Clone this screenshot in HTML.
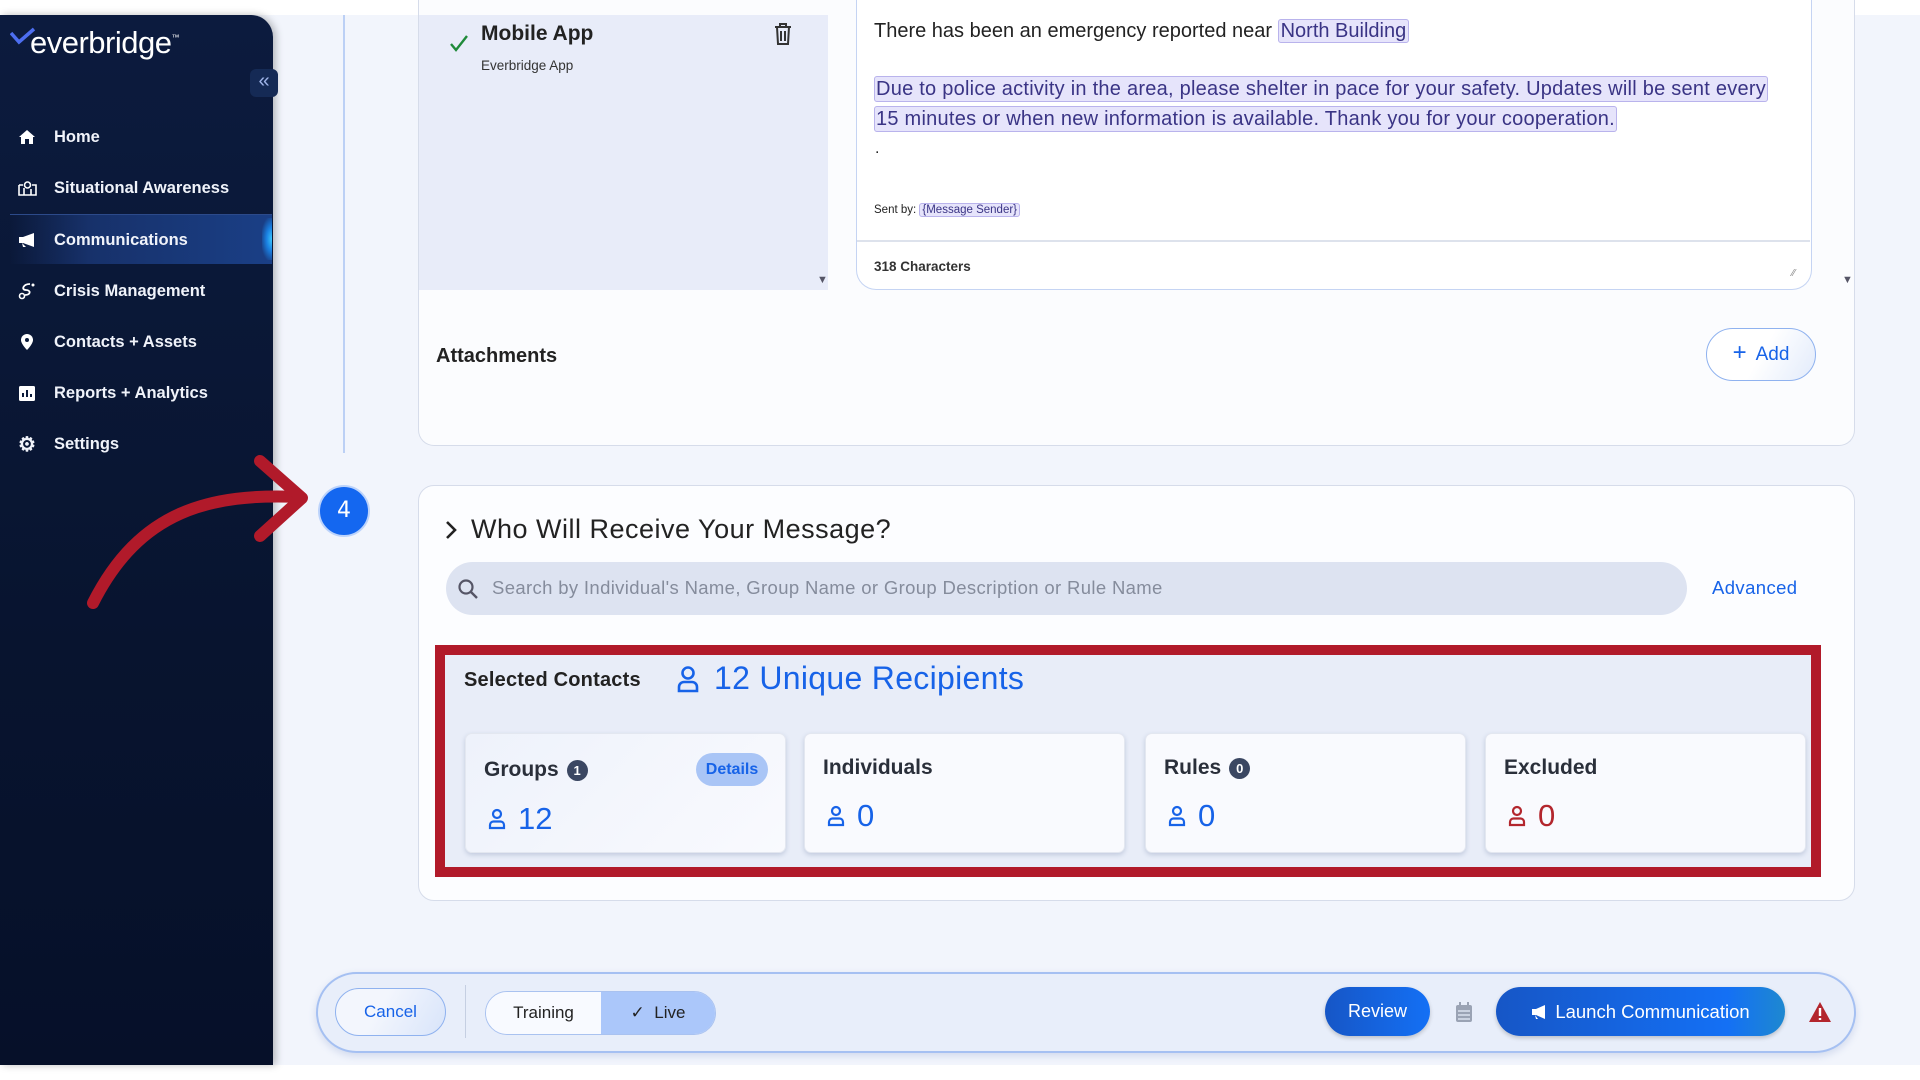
<!DOCTYPE html>
<html><head><meta charset="utf-8"><style>
*{margin:0;padding:0;box-sizing:border-box}
body{width:1920px;height:1080px;overflow:hidden;background:#fff;font-family:"Liberation Sans",sans-serif;position:relative}
.abs{position:absolute}
#main{left:0;top:15px;width:1920px;height:1050px;background:#f2f5fc}
#side{left:0;top:15px;width:273px;height:1050px;background:linear-gradient(180deg,#0c1b3e,#08142f 60%,#061029);border-radius:0 22px 0 0;box-shadow:3px 0 8px rgba(0,0,0,.25)}
.nav{position:absolute;left:0;width:272px;height:40px;color:#f0f3fa;font-size:16.5px;font-weight:bold;display:flex;align-items:center}
.nav .ic{width:54px;display:flex;justify-content:center;padding-left:0}
.card{background:#fbfcfe;border:1.5px solid #d6dcea;border-radius:16px}
.hl{background:#e6e4fb;border:1px solid #b9b3ec;border-radius:3px;color:#3a3485}
.sc{position:absolute;top:733px;width:321px;height:120px;background:#f9fafe;border-radius:7px;box-shadow:0 2px 5px rgba(60,80,130,.22);border:1px solid #e3e7f0}
.sc .tt{position:absolute;left:18px;top:22px;font-size:21px;font-weight:bold;color:#2a2f3a;display:flex;align-items:center}
.badge{display:inline-block;width:21px;height:21px;border-radius:50%;background:#3b4762;color:#fff;font-size:13px;text-align:center;line-height:21px;margin-left:8px}
.sc .v{position:absolute;left:22px;top:64px;font-size:31px;color:#1763e8;display:flex;align-items:center}
.sc .v svg{margin-right:12px}
</style></head><body>
<div id="main" class="abs"></div>
<div class="abs" style="left:343px;top:15px;width:1.5px;height:438px;background:#bcd0f5"></div>

<!-- top card -->
<div class="abs card" style="left:418px;top:0;width:1437px;height:446px;border-top:none;border-radius:0 0 16px 16px"></div>
<div class="abs" style="left:419px;top:15px;width:409px;height:275px;background:#e8ecf9"></div>
<svg class="abs" style="left:448px;top:32px" width="22" height="22" viewBox="0 0 22 22"><path d="M3 12 L8 18 L19 4" stroke="#1f8a3a" stroke-width="2.4" fill="none"/></svg>
<div class="abs" style="left:481px;top:22px;font-size:21px;font-weight:bold;color:#222">Mobile App</div>
<div class="abs" style="left:481px;top:58px;font-size:13.5px;color:#333">Everbridge App</div>
<svg class="abs" style="left:773px;top:22px" width="20" height="24" viewBox="0 0 20 24"><path d="M2 5h16M7 5V2h6v3M4 5l1 17h10l1-17M8 9v10M12 9v10" stroke="#333" stroke-width="2" fill="none"/></svg>
<div class="abs" style="left:817px;top:274px;font-size:11px;color:#556">▼</div>
<div class="abs" style="left:1842px;top:274px;font-size:11px;color:#556">▼</div>
<div class="abs" style="left:856px;top:0;width:956px;height:290px;background:#fff;border:1.5px solid #c5d4f3;border-top:none;border-radius:0 0 20px 20px"></div>
<div class="abs" style="left:874px;top:20px;font-size:20px;color:#222">There has been an emergency reported near <span class="hl" style="padding:0 2px">North Building</span></div>
<div class="abs" style="left:874px;top:74px;width:930px;font-size:20px;line-height:30px;color:#3a3485;letter-spacing:0.25px"><span class="hl" style="padding:1px 1px">Due to police activity in the area, please shelter in pace for your safety. Updates will be sent every</span><br><span class="hl" style="padding:1px 1px">15 minutes or when new information is available. Thank you for your cooperation.</span></div>
<div class="abs" style="left:875px;top:140px;font-size:16px;color:#222">.</div>
<div class="abs" style="left:874px;top:204px;font-size:11.5px;color:#222">Sent by: <span class="hl" style="padding:0 2px">{Message Sender}</span></div>
<div class="abs" style="left:857px;top:240px;width:953px;height:1.5px;background:#dde2ec"></div>
<div class="abs" style="left:874px;top:259px;font-size:13.5px;font-weight:bold;color:#333">318 Characters</div>
<div class="abs" style="left:1792px;top:268px;font-size:10px;color:#888">⁄⁄</div>
<div class="abs" style="left:436px;top:345px;font-size:20px;font-weight:bold;color:#222">Attachments</div>
<div class="abs" style="left:1706px;top:328px;width:110px;height:53px;border:1.5px solid #8fb2ef;border-radius:27px;background:linear-gradient(120deg,#fff 50%,#e2ebfb);color:#1763e8;font-size:19px;display:flex;align-items:center;justify-content:center"><span style="font-size:24px;margin-right:9px;margin-top:-3px">+</span>Add</div>

<!-- who card -->
<div class="abs card" style="left:418px;top:485px;width:1437px;height:416px;background:#fcfdff"></div>
<svg class="abs" style="left:444px;top:520px" width="14" height="20" viewBox="0 0 14 20"><path d="M3 2l8 8-8 8" stroke="#222" stroke-width="2.6" fill="none"/></svg>
<div class="abs" style="left:471px;top:514px;font-size:27px;color:#222;letter-spacing:0.5px">Who Will Receive Your Message?</div>
<div class="abs" style="left:446px;top:562px;width:1241px;height:53px;border-radius:27px;background:#dde3f1"></div>
<svg class="abs" style="left:457px;top:578px" width="22" height="22" viewBox="0 0 22 22"><circle cx="9" cy="9" r="6.5" stroke="#556" stroke-width="2.2" fill="none"/><path d="M14 14l6 6" stroke="#556" stroke-width="2.4"/></svg>
<div class="abs" style="left:492px;top:577px;font-size:18.5px;color:#858c9c;letter-spacing:0.35px">Search by Individual's Name, Group Name or Group Description or Rule Name</div>
<div class="abs" style="left:1712px;top:577px;font-size:18.5px;color:#1763e8;letter-spacing:0.4px">Advanced</div>

<div class="abs" style="left:435px;top:645px;width:1386px;height:232px;border:10px solid #b11a2a;background:#e8edf8"></div>
<div class="abs" style="left:464px;top:669px;font-size:20px;font-weight:bold;color:#222;letter-spacing:0.2px">Selected Contacts</div>
<svg class="abs" style="left:676px;top:665px" width="24" height="28" viewBox="0 0 24 28"><circle cx="12" cy="8" r="5.5" stroke="#1763e8" stroke-width="2.6" fill="none"/><path d="M3 26v-4a5 5 0 015-5h8a5 5 0 015 5v4z" stroke="#1763e8" stroke-width="2.6" fill="none"/></svg>
<div class="abs" style="left:714px;top:660px;font-size:32px;color:#1763e8;letter-spacing:0.3px">12 Unique Recipients</div>

<div class="sc" style="left:465px;background:linear-gradient(135deg,#eef2fb,#f9fafe)"><div class="tt" style="top:24px">Groups<span class="badge">1</span></div>
<div class="abs" style="left:230px;top:19px;width:72px;height:33px;border-radius:17px;background:#a9c5f6;color:#1763e8;font-size:16px;text-align:center;line-height:33px;font-weight:bold">Details</div>
<div class="v" style="top:67px"><svg width="18" height="22" viewBox="0 0 18 22"><circle cx="9" cy="6" r="4" stroke="#1763e8" stroke-width="2.2" fill="none"/><path d="M2 20v-3a3.5 3.5 0 013.5-3.5h7A3.5 3.5 0 0116 17v3z" stroke="#1763e8" stroke-width="2.2" fill="none"/></svg>12</div></div>
<div class="sc" style="left:804px"><div class="tt">Individuals</div><div class="v"><svg width="18" height="22" viewBox="0 0 18 22"><circle cx="9" cy="6" r="4" stroke="#1763e8" stroke-width="2.2" fill="none"/><path d="M2 20v-3a3.5 3.5 0 013.5-3.5h7A3.5 3.5 0 0116 17v3z" stroke="#1763e8" stroke-width="2.2" fill="none"/></svg>0</div></div>
<div class="sc" style="left:1145px"><div class="tt">Rules<span class="badge">0</span></div><div class="v"><svg width="18" height="22" viewBox="0 0 18 22"><circle cx="9" cy="6" r="4" stroke="#1763e8" stroke-width="2.2" fill="none"/><path d="M2 20v-3a3.5 3.5 0 013.5-3.5h7A3.5 3.5 0 0116 17v3z" stroke="#1763e8" stroke-width="2.2" fill="none"/></svg>0</div></div>
<div class="sc" style="left:1485px"><div class="tt">Excluded</div><div class="v" style="color:#b3262d"><svg width="18" height="22" viewBox="0 0 18 22"><circle cx="9" cy="6" r="4" stroke="#b3262d" stroke-width="2.2" fill="none"/><path d="M2 20v-3a3.5 3.5 0 013.5-3.5h7A3.5 3.5 0 0116 17v3z" stroke="#b3262d" stroke-width="2.2" fill="none"/></svg>0</div></div>

<!-- bottom bar -->
<div class="abs" style="left:316px;top:972px;width:1540px;height:81px;border-radius:41px;background:#e8eefa;border:2px solid #a5c0f2;box-shadow:0 3px 8px rgba(80,110,180,.2)"></div>
<div class="abs" style="left:335px;top:988px;width:111px;height:48px;border-radius:24px;border:1.5px solid #8fb2ef;background:linear-gradient(120deg,#f3f6fd 40%,#d8e4fa);color:#1763e8;font-size:17px;text-align:center;line-height:45px">Cancel</div>
<div class="abs" style="left:465px;top:985px;width:1px;height:53px;background:#c5cfe2"></div>
<div class="abs" style="left:485px;top:991px;width:231px;height:44px;border-radius:22px;border:1.5px solid #a9c2f0;overflow:hidden;display:flex">
<div style="width:115px;background:#f8faff;color:#222;font-size:17px;text-align:center;line-height:41px">Training</div>
<div style="flex:1;background:#abc7fa;color:#222;font-size:17px;text-align:center;line-height:41px">✓&nbsp;&nbsp;Live</div></div>
<div class="abs" style="left:1325px;top:987px;width:105px;height:49px;border-radius:25px;background:linear-gradient(90deg,#1656c6,#1470f5);color:#fff;font-size:18px;text-align:center;line-height:49px;box-shadow:0 2px 4px rgba(0,0,0,.2)">Review</div>
<svg class="abs" style="left:1455px;top:1001px" width="18" height="22" viewBox="0 0 18 22"><rect x="1" y="4" width="16" height="17" rx="2" fill="#9aa3b4"/><rect x="4" y="1" width="2" height="5" fill="#9aa3b4"/><rect x="12" y="1" width="2" height="5" fill="#9aa3b4"/><path d="M3 10h12M3 14h12M3 18h12" stroke="#e8eefa" stroke-width="1.3"/></svg>
<div class="abs" style="left:1496px;top:987px;width:289px;height:49px;border-radius:25px;background:linear-gradient(90deg,#1656c6,#1470f5 80%,#1e88d0);color:#fff;font-size:18.5px;text-align:center;line-height:49px;box-shadow:0 2px 4px rgba(0,0,0,.2)"><svg width="18" height="16" viewBox="0 0 18 16" style="vertical-align:-2px;margin-right:6px"><path d="M1 5h4l9-4v14l-9-4H1z M4 11l1 4h2" fill="#fff"/></svg>Launch Communication</div>
<svg class="abs" style="left:1808px;top:1001px" width="24" height="22" viewBox="0 0 24 22"><path d="M12 1L23 21H1z" fill="#b3262d"/><path d="M12 7v8M12 17v2" stroke="#fff" stroke-width="2.4"/></svg>

<!-- sidebar -->
<div id="side" class="abs">
<div class="abs" style="left:10px;top:10px;color:#fff;font-size:31px;letter-spacing:-0.5px;display:flex;align-items:flex-start"><svg width="26" height="20" viewBox="0 0 26 20" style="margin-top:2px"><path d="M1 6l8 9L24 2" stroke="#4d6ef0" stroke-width="3.5" fill="none"/></svg><span style="margin-left:-6px">everbridge</span><span style="font-size:8px;margin-top:8px">™</span></div>
<div class="abs" style="left:250px;top:54px;width:28px;height:28px;border-radius:6px;background:#152a55;color:#9fb4e8;font-size:20px;text-align:center;line-height:24px">«</div>
<div class="nav" style="top:102px"><div class="ic"><svg width="18" height="16" viewBox="0 0 18 16"><path d="M9 1L1 8h2v7h4v-5h4v5h4V8h2z" fill="#fff"/></svg></div>Home</div>
<div class="nav" style="top:153px"><div class="ic"><svg width="19" height="16" viewBox="0 0 19 16"><path d="M1 5h4M14 5h4v10H1V5M6 15V8M13 15V9" stroke="#fff" stroke-width="1.6" fill="none"/><circle cx="9.5" cy="5" r="3" stroke="#fff" stroke-width="1.6" fill="none"/></svg></div>Situational Awareness</div>
<div class="abs" style="left:10px;top:199px;width:262px;height:50px;background:linear-gradient(90deg,rgba(30,70,150,0) 0%,#17316a 30%,#1a3f86 100%);border-top:1px solid #2c4a8a"></div>
<div class="abs" style="left:262px;top:203px;width:10px;height:42px;background:radial-gradient(ellipse at right,#3ac6ff 0%,#1a7fe0 40%,rgba(26,127,224,0) 80%)"></div>
<div class="nav" style="top:205px"><div class="ic"><svg width="18" height="16" viewBox="0 0 18 16"><path d="M1 5h4l11-4v14L5 11H1z M4 11l1 4h3" fill="#fff"/></svg></div>Communications</div>
<div class="nav" style="top:256px"><div class="ic"><svg width="18" height="18" viewBox="0 0 18 18"><circle cx="4" cy="14" r="2.5" stroke="#fff" stroke-width="1.6" fill="none"/><path d="M7 13c6 0 6-5 1-5s-3-6 4-6" stroke="#fff" stroke-width="1.8" fill="none"/><circle cx="15" cy="3" r="1.5" fill="#fff"/></svg></div>Crisis Management</div>
<div class="nav" style="top:307px"><div class="ic"><svg width="14" height="18" viewBox="0 0 14 18"><path d="M7 1a6 6 0 00-6 6c0 4 6 10 6 10s6-6 6-10a6 6 0 00-6-6z" fill="#fff"/><circle cx="7" cy="7" r="2" fill="#0b1a3a"/></svg></div>Contacts + Assets</div>
<div class="nav" style="top:358px"><div class="ic"><svg width="16" height="15" viewBox="0 0 16 15"><rect width="16" height="15" rx="1.5" fill="#fff"/><path d="M4 11V7M8 11V4M12 11V8" stroke="#0b1a3a" stroke-width="2"/></svg></div>Reports + Analytics</div>
<div class="nav" style="top:409px"><div class="ic"><span style="font-size:20px">⚙</span></div>Settings</div>
</div>

<!-- step + arrow -->
<div class="abs" style="left:318px;top:485px;width:52px;height:52px;border-radius:50%;background:#1467f0;border:2px solid #bcd3fb;color:#fff;font-size:22px;text-align:center;line-height:48px;font-family:'DejaVu Sans',sans-serif">4</div>
<svg class="abs" style="left:0;top:0" width="400" height="700" viewBox="0 0 400 700"><path d="M93 603 C140 510 210 493 300 497" stroke="#b11a2a" stroke-width="12" fill="none" stroke-linecap="round"/><path d="M260 461 L302 498 L260 536" stroke="#b11a2a" stroke-width="12" fill="none" stroke-linecap="round" stroke-linejoin="round"/></svg>
</body></html>
